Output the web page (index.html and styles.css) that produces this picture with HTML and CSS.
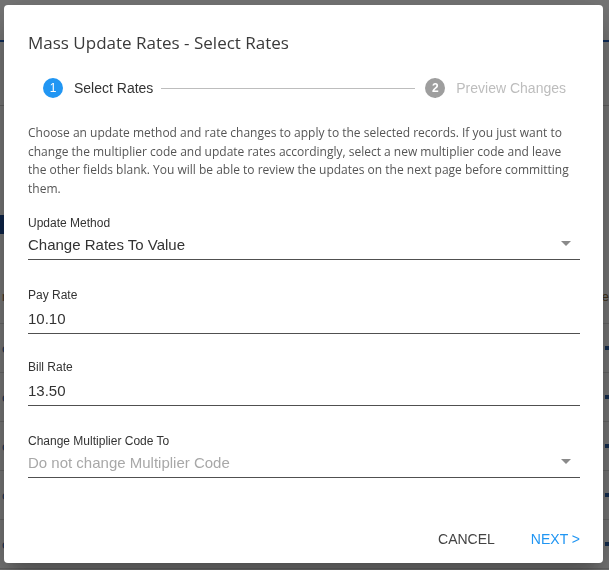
FILE: index.html
```html
<!DOCTYPE html>
<html lang="en">
<head>
<meta charset="utf-8">
<title>Mass Update Rates</title>
<link rel="stylesheet" href="styles.css">
</head>
<body>
<div class="page">
  <div class="page-header"></div>
  <div class="page-toolbar"></div>
  <div class="page-button"></div>
  <div class="page-head-row"><span class="pcell">n</span><span class="pcell right">ne</span></div>
  <div class="page-row"><span class="pcell">os</span><span class="pcell right dot"></span></div>
  <div class="page-row"><span class="pcell">os</span><span class="pcell right dot"></span></div>
  <div class="page-row"><span class="pcell">os</span><span class="pcell right dot"></span></div>
  <div class="page-row"><span class="pcell">os</span><span class="pcell right dot"></span></div>
  <div class="page-row"><span class="pcell">oc</span><span class="pcell right dot"></span></div>
</div>
<div class="overlay">
  <div class="dialog">
    <h2 class="title">Mass Update Rates - Select Rates</h2>
    <div class="stepper">
      <div class="step">
        <span class="step-icon">1</span>
        <span class="step-label">Select Rates</span>
      </div>
      <div class="connector"></div>
      <div class="step step-disabled">
        <span class="step-icon">2</span>
        <span class="step-label">Preview Changes</span>
      </div>
    </div>
    <p class="desc">Choose an update method and rate changes to apply to the selected records. If you just want to change the multiplier code and update rates accordingly, select a new multiplier code and leave the other fields blank. You will be able to review the updates on the next page before committing them.</p>

    <div class="field field-select field-first">
      <div class="field-label">Update Method</div>
      <div class="field-input">
        <span class="field-value">Change Rates To Value</span>
        <span class="caret"></span>
      </div>
    </div>

    <div class="field field-text field-gap">
      <div class="field-label">Pay Rate</div>
      <div class="field-input">
        <span class="field-value">10.10</span>
      </div>
    </div>

    <div class="field field-text field-gap-sm">
      <div class="field-label">Bill Rate</div>
      <div class="field-input">
        <span class="field-value">13.50</span>
      </div>
    </div>

    <div class="field field-select field-gap">
      <div class="field-label">Change Multiplier Code To</div>
      <div class="field-input">
        <span class="field-value placeholder">Do not change Multiplier Code</span>
        <span class="caret"></span>
      </div>
    </div>

    <div class="actions">
      <button class="btn">Cancel</button>
      <button class="btn btn-primary">Next &gt;</button>
    </div>
  </div>
</div>
</body>
</html>
```

FILE: styles.css
```css
html, body {
  margin: 0;
  height: 100%;
}

body {
  font-family: "Liberation Sans", Arial, sans-serif;
  background: #ffffff;
  overflow: hidden;
}

/* page behind the modal */
.page {
  height: 570px;
  overflow: hidden;
}

.page-header {
  height: 40px;
  border-bottom: 2px solid #1f5fbf;
}

.page-toolbar {
  height: 63px;
  border-bottom: 1px solid #cfcfcf;
}

.page-button {
  width: 60px;
  height: 19px;
  margin-top: 109px;
  background: #1d4f9c;
}

.page-head-row,
.page-row {
  display: flex;
  justify-content: space-between;
  align-items: center;
  font-size: 13px;
  color: #8a6a3a;
  border-bottom: 1px solid #dcdcdc;
}

.page-head-row {
  height: 54px;
  margin-top: 35px;
}

.page-row {
  height: 48px;
  color: #2a5fa8;
}

.pcell {
  padding: 0 2px;
}

.pcell.right {
  padding-right: 0;
}

.dot {
  width: 2px;
  height: 4px;
  background: #2a5fa8;
}

/* overlay + dialog */
.overlay {
  position: fixed;
  inset: 0;
  background: rgba(0, 0, 0, 0.54);
}

.dialog {
  position: absolute;
  left: 4px;
  top: 5px;
  width: 599px;
  height: 558px;
  box-sizing: border-box;
  padding: 0 23px 0 24px;
  background: #ffffff;
  border-radius: 4px;
  box-shadow: 0 11px 15px -7px rgba(0, 0, 0, 0.2),
              0 24px 38px 3px rgba(0, 0, 0, 0.14),
              0 9px 46px 8px rgba(0, 0, 0, 0.12);
  display: flex;
  flex-direction: column;
}

.title {
  margin: 26px 0 0;
  font-family: "Open Sans", "Liberation Sans", sans-serif;
  font-weight: 400;
  font-size: 17px;
  line-height: 24px;
  color: #3a3a3a;
}

/* stepper */
.stepper {
  margin-top: 21px;
  height: 24px;
  display: flex;
  align-items: center;
  padding: 0 14px 0 15px;
}

.step {
  display: flex;
  align-items: center;
}

.step-icon {
  width: 20px;
  height: 20px;
  border-radius: 50%;
  background: #2196f3;
  color: #ffffff;
  font-size: 12px;
  line-height: 20px;
  text-align: center;
  font-weight: 400;
}

.step-label {
  margin-left: 11px;
  font-size: 14px;
  color: #333333;
}

.step-disabled .step-icon {
  background: #9e9e9e;
  font-weight: 700;
}

.step-disabled .step-label {
  color: #bdbdbd;
}

.connector {
  flex: 1;
  height: 1px;
  background: #bdbdbd;
  margin: 0 10px 0 8px;
}

/* description */
.desc {
  margin: 24px 0 0;
  font-family: "Open Sans", "Liberation Sans", sans-serif;
  font-size: 12px;
  line-height: 18.7px;
  color: #555555;
}

/* fields */
.field-first {
  margin-top: 17px;
}

.field-gap {
  margin-top: 28px;
}

.field-gap-sm {
  margin-top: 26px;
}

.field-label {
  font-size: 12px;
  line-height: 14px;
  color: #333333;
}

.field-input {
  display: flex;
  align-items: center;
  padding-bottom: 4px;
  border-bottom: 1px solid #505050;
}

.field-select .field-input {
  margin-top: 5px;
}

.field-text .field-input {
  margin-top: 7px;
}

.field-value {
  flex: 1;
  font-size: 15px;
  line-height: 20px;
  color: #333333;
}

.field-value.placeholder {
  color: #a8a8a8;
}

.caret {
  width: 0;
  height: 0;
  border-left: 5px solid transparent;
  border-right: 5px solid transparent;
  border-top: 5px solid #8a8a8a;
  margin-right: 9px;
  margin-top: -2px;
}

/* actions */
.actions {
  margin-top: auto;
  padding-bottom: 16px;
  display: flex;
  justify-content: flex-end;
  gap: 36px;
}

.btn {
  border: 0;
  background: none;
  padding: 0;
  font-family: "Liberation Sans", Arial, sans-serif;
  font-size: 14px;
  line-height: 16px;
  text-transform: uppercase;
  color: #444444;
  cursor: pointer;
}

.btn-primary {
  color: #2196f3;
}
```
